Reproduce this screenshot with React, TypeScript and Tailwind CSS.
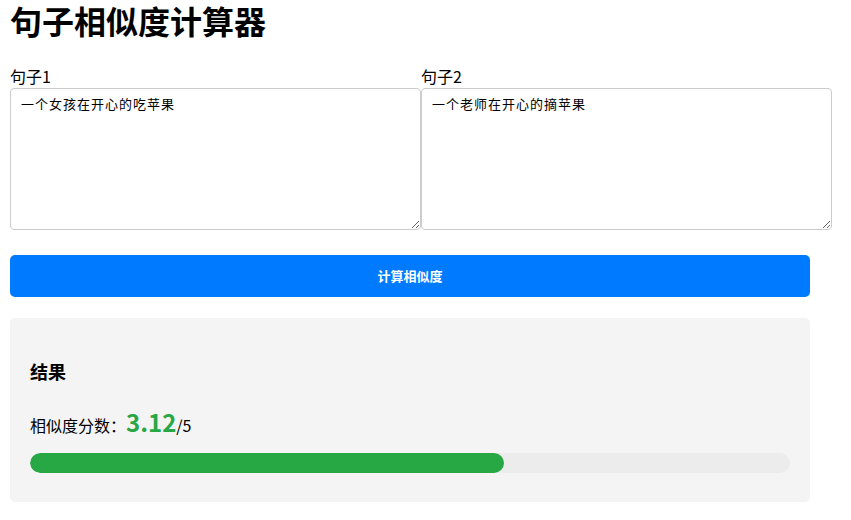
import { useState } from "react";

const cjk = "font-['Noto_Sans_CJK_SC','Noto_Sans',sans-serif]";

export default function App() {
  const [s1, setS1] = useState("一个女孩在开心的吃苹果");
  const [s2, setS2] = useState("一个老师在开心的摘苹果");
  const score = 3.12;

  return (
    <div className={`${cjk} px-[10px] text-black bg-white min-h-[520px]`}>
      <h1 className="text-[32px] font-bold leading-[40px] pt-0 mb-[28px]">句子相似度计算器</h1>

      {/* inputs */}
      <div className="flex">
        <div className="w-[411px] flex flex-col">
          <label className="text-[16px] leading-[16px] mb-[4px]">句子1</label>
          <textarea
            value={s1}
            onChange={(e) => setS1(e.target.value)}
            className="h-[142px] w-full border border-[#ccc] rounded-[4px] px-[10px] py-[8px] text-[13px] leading-[18px] font-['Liberation_Mono','Noto_Sans_CJK_SC',monospace] tracking-[1px] outline-none"
          />
        </div>
        <div className="w-[411px] flex flex-col">
          <label className="text-[16px] leading-[16px] mb-[4px]">句子2</label>
          <textarea
            value={s2}
            onChange={(e) => setS2(e.target.value)}
            className="h-[142px] w-full border border-[#ccc] rounded-[4px] px-[10px] py-[8px] text-[13px] leading-[18px] font-['Liberation_Mono','Noto_Sans_CJK_SC',monospace] tracking-[1px] outline-none"
          />
        </div>
      </div>

      <button className="mt-[25px] w-[800px] h-[42px] bg-[#007bff] text-white text-[13px] font-bold rounded-[5px] flex items-center justify-center">
        计算相似度
      </button>

      {/* result */}
      <div className="mt-[21px] w-[800px] h-[184px] bg-[#f4f4f4] rounded-[5px] px-[20px] pt-[40px]">
        <h3 className="text-[18px] font-bold leading-[26px]">结果</h3>
        <p className="mt-[22px] text-[16px] leading-[32px] flex items-baseline">
          相似度分数：
          <span className="text-[24px] font-bold text-[#28a745]">{score.toFixed(2)}</span>
          /5
        </p>
        <div className="mt-[12px] h-[20px] w-full rounded-full bg-[#ececec] overflow-hidden">
          <div className="h-full rounded-full bg-[#28a745]" style={{ width: `${(score / 5) * 100}%` }} />
        </div>
      </div>
    </div>
  );
}
